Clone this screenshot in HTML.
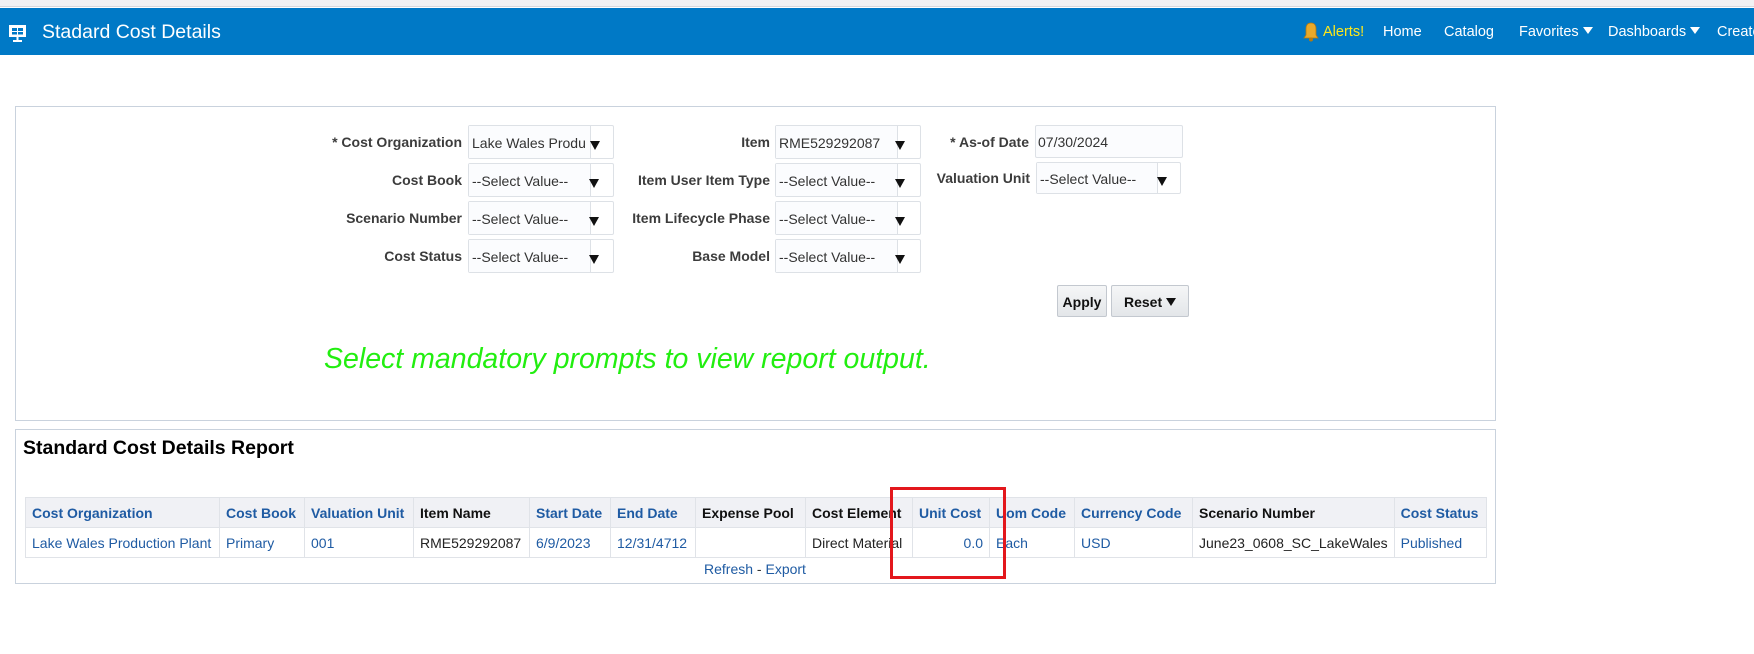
<!DOCTYPE html>
<html><head><meta charset="utf-8"><style>
*{margin:0;padding:0;box-sizing:border-box}
body{width:1754px;height:654px;background:#fff;font-family:"Liberation Sans",Arial,sans-serif;position:relative;overflow:hidden}
.a{position:absolute;white-space:nowrap}
.lbl{font-weight:bold;font-size:14px;color:#3c3c3c;text-align:right}
.sel{position:absolute;border:1px solid #dde1e6;border-radius:2px;background:#fff}
.sel .in{position:absolute;left:0;top:0;bottom:0;background:#fbfcfe;border-right:1px solid #dde1e6;font-size:14px;color:#333;padding:9px 0 0 3px;overflow:hidden;white-space:nowrap}
.tri{position:absolute;width:0;height:0;border-left:5px solid transparent;border-right:5px solid transparent;border-top:9px solid #111}
.nav{color:#fff;font-size:14.5px;top:24px}
.wt{display:inline-block;width:0;height:0;border-left:5px solid transparent;border-right:5px solid transparent;border-top:7px solid #fff;margin-left:4px;vertical-align:2px}
table{border-collapse:collapse;position:absolute;left:25px;top:497px;font-size:14px}
td,th{border:1px solid #e0e3e8;padding:0 6px;white-space:nowrap;text-align:left}
th{background:#f0f1f5;height:30px;font-weight:bold;color:#111}
td{height:30px;color:#222}
.l{color:#1f5ba3}
.btn{position:absolute;border:1px solid #c3c8cf;border-radius:2px;background:linear-gradient(#f5f6f7,#e3e6e9);font-weight:bold;font-size:14px;color:#111;text-align:center;padding-top:8px}
</style></head><body>
<div class="a" style="left:0;top:0;width:1754px;height:7px;background:#f1f1f3;border-bottom:1px solid #d8d8dc"></div>
<div class="a" style="left:0;top:8px;width:1754px;height:47px;background:#0079c6"></div>
<svg class="a" style="left:7px;top:24px" width="22" height="20" viewBox="0 0 22 20"><rect x="2" y="1" width="17" height="12" fill="#fff"/><rect x="5" y="4" width="5" height="3" fill="#0079c6"/><rect x="11" y="4" width="5" height="3" fill="#0079c6"/><rect x="5" y="8" width="5" height="2.5" fill="#0079c6"/><rect x="11" y="8" width="5" height="2.5" fill="#0079c6"/><rect x="9.5" y="13" width="2" height="3" fill="#fff"/><rect x="6" y="16" width="9" height="2" fill="#fff"/></svg>
<div class="a" style="left:42px;top:21px;color:#fff;font-size:19.5px">Stadard Cost Details</div>
<svg class="a" style="left:1302px;top:22px" width="18" height="20" viewBox="0 0 18 20"><path d="M9 1c-3 0-5 2-5 6v6l-2 3h14l-2-3V7c0-4-2-6-5-6z" fill="#e8a92a" stroke="#b37a10" stroke-width=".8"/><circle cx="9" cy="17.5" r="2" fill="#b37a10"/></svg>
<div class="a nav" style="left:1323px;color:#ffe81a">Alerts!</div>
<div class="a nav" style="left:1383px">Home</div>
<div class="a nav" style="left:1444px">Catalog</div>
<div class="a nav" style="left:1519px">Favorites<span class="wt"></span></div>
<div class="a nav" style="left:1608px">Dashboards<span class="wt"></span></div>
<div class="a nav" style="left:1717px">Create</div>

<div class="a" style="left:15px;top:106px;width:1481px;height:315px;border:1px solid #c9d2dd"></div>

<div class="a lbl" style="left:300px;top:134px;width:162px">* Cost Organization</div>
<div class="sel" style="left:468px;top:125px;width:146px;height:34px"><div class="in" style="width:122px">Lake Wales Produ</div><div class="tri" style="left:121px;top:15px"></div></div>
<div class="a lbl" style="left:300px;top:172px;width:162px">Cost Book</div>
<div class="sel" style="left:468px;top:163px;width:146px;height:34px"><div class="in" style="width:122px">--Select Value--</div><div class="tri" style="left:120px;top:15px"></div></div>
<div class="a lbl" style="left:300px;top:210px;width:162px">Scenario Number</div>
<div class="sel" style="left:468px;top:201px;width:146px;height:34px"><div class="in" style="width:122px">--Select Value--</div><div class="tri" style="left:120px;top:15px"></div></div>
<div class="a lbl" style="left:300px;top:248px;width:162px">Cost Status</div>
<div class="sel" style="left:468px;top:239px;width:146px;height:34px"><div class="in" style="width:122px">--Select Value--</div><div class="tri" style="left:120px;top:15px"></div></div>

<div class="a lbl" style="left:600px;top:134px;width:170px">Item</div>
<div class="sel" style="left:775px;top:125px;width:146px;height:34px"><div class="in" style="width:122px">RME529292087</div><div class="tri" style="left:119px;top:15px"></div></div>
<div class="a lbl" style="left:600px;top:172px;width:170px">Item User Item Type</div>
<div class="sel" style="left:775px;top:163px;width:146px;height:34px"><div class="in" style="width:122px">--Select Value--</div><div class="tri" style="left:119px;top:15px"></div></div>
<div class="a lbl" style="left:600px;top:210px;width:170px">Item Lifecycle Phase</div>
<div class="sel" style="left:775px;top:201px;width:146px;height:34px"><div class="in" style="width:122px">--Select Value--</div><div class="tri" style="left:119px;top:15px"></div></div>
<div class="a lbl" style="left:600px;top:248px;width:170px">Base Model</div>
<div class="sel" style="left:775px;top:239px;width:146px;height:34px"><div class="in" style="width:122px">--Select Value--</div><div class="tri" style="left:119px;top:15px"></div></div>

<div class="a lbl" style="left:900px;top:134px;width:129px">* As-of Date</div>
<div class="sel" style="left:1035px;top:125px;width:148px;height:33px;background:#fbfcfe"><div style="font-size:14px;color:#333;padding:8px 0 0 2px">07/30/2024</div></div>
<div class="a lbl" style="left:900px;top:170px;width:130px">Valuation Unit</div>
<div class="sel" style="left:1036px;top:162px;width:145px;height:32px"><div class="in" style="width:121px;padding-top:8px">--Select Value--</div><div class="tri" style="left:120px;top:14px"></div></div>

<div class="btn" style="left:1057px;top:285px;width:50px;height:32px">Apply</div>
<div class="btn" style="left:1111px;top:285px;width:78px;height:32px">Reset <span style="display:inline-block;width:0;height:0;border-left:5px solid transparent;border-right:5px solid transparent;border-top:8px solid #111;vertical-align:1px"></span></div>

<div class="a" style="left:324px;top:343px;font-size:28.5px;font-style:italic;color:#22ee10">Select mandatory prompts to view report output.</div>

<div class="a" style="left:15px;top:429px;width:1481px;height:155px;border:1px solid #c9d2dd"></div>
<div class="a" style="left:23px;top:437px;font-size:19.5px;font-weight:bold;color:#000">Standard Cost Details Report</div>

<table>
<tr>
<th class="l" style="width:194px">Cost Organization</th>
<th class="l" style="width:85px">Cost Book</th>
<th class="l" style="width:109px">Valuation Unit</th>
<th style="width:116px">Item Name</th>
<th class="l" style="width:81px">Start Date</th>
<th class="l" style="width:85px">End Date</th>
<th style="width:110px">Expense Pool</th>
<th style="width:107px">Cost Element</th>
<th class="l" style="width:77px">Unit Cost</th>
<th class="l" style="width:85px">Uom Code</th>
<th class="l" style="width:118px">Currency Code</th>
<th style="width:201px">Scenario Number</th>
<th class="l" style="width:92px">Cost Status</th>
</tr>
<tr>
<td class="l">Lake Wales Production Plant</td>
<td class="l">Primary</td>
<td class="l">001</td>
<td>RME529292087</td>
<td class="l">6/9/2023</td>
<td class="l">12/31/4712</td>
<td></td>
<td>Direct Material</td>
<td class="l" style="text-align:right">0.0</td>
<td class="l">Each</td>
<td class="l">USD</td>
<td>June23_0608_SC_LakeWales</td>
<td class="l">Published</td>
</tr>
</table>
<div class="a" style="left:704px;top:561px;font-size:14px;color:#1f5ba3">Refresh <span style="color:#333">-</span> Export</div>
<div class="a" style="left:890px;top:487px;width:116px;height:92px;border:3px solid #e3171c"></div>
</body></html>
